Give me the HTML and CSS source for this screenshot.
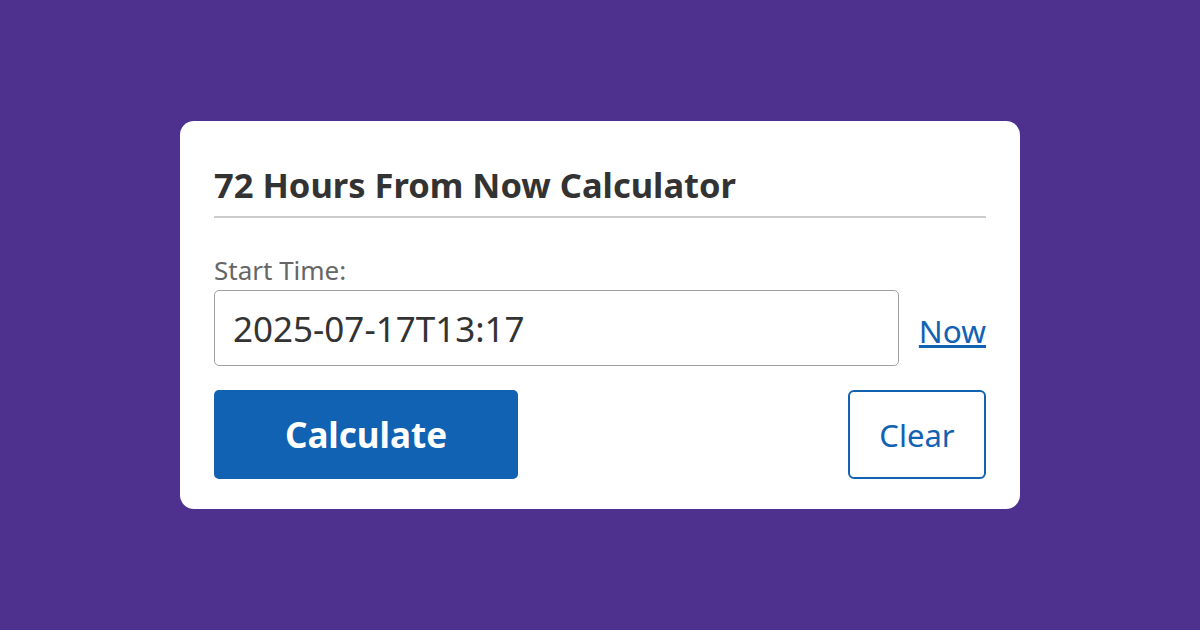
FILE: index.html
```html
<!DOCTYPE html>
<html lang="en">
<head>
    <meta charset="UTF-8">
    <meta name="viewport" content="width=device-width, initial-scale=1.0">
    <title>72 Hours From Now Calculator</title>
    <link rel="stylesheet" href="styles.css">
</head>
<body>
    <div class="calculator">
        <h1 class="calc-title">72 Hours From Now Calculator</h1>

        <label class="field-label" for="startTime">Start Time:</label>
        <div class="input-row">
            <input class="time-input" id="startTime" type="text" value="2025-07-17T13:17">
            <a class="now-link" href="#">Now</a>
        </div>

        <div class="button-row">
            <button class="calc-button">Calculate</button>
            <button class="clear-button">Clear</button>
        </div>
    </div>
</body>
</html>
```

FILE: styles.css
```css
body {
    margin: 0;
    width: 1200px;
    height: 630px;
    background-color: #4e318f;
    font-family: "Noto Sans", "Open Sans", sans-serif;
    display: flex;
    align-items: center;
    justify-content: center;
}

.calculator {
    box-sizing: border-box;
    width: 840px;
    height: 388px;
    background-color: #ffffff;
    border-radius: 14px;
    padding: 30px 34px 30px 34px;
    display: flex;
    flex-direction: column;
}

.calc-title {
    margin: 0;
    font-size: 34.5px;
    font-weight: 700;
    color: #333333;
    padding: 12px 0 9px 0;
    line-height: 44px;
    border-bottom: 2px solid #cccccc;
}

.field-label {
    margin-top: 37px;
    font-size: 26px;
    line-height: 30px;
    color: #666666;
}

.input-row {
    display: flex;
    align-items: center;
    gap: 20px;
    margin-top: 5px;
}

.time-input {
    box-sizing: border-box;
    flex: 1;
    height: 76px;
    border: 1px solid #a0a0a0;
    border-radius: 5px;
    padding: 0 18px;
    font-family: inherit;
    font-size: 35px;
    color: #333333;
}

.now-link {
    font-size: 31.5px;
    line-height: 40px;
    margin-top: 6px;
    color: #1162b3;
    text-decoration: underline;
}

.button-row {
    display: flex;
    justify-content: space-between;
    margin-top: 24px;
}

.calc-button {
    width: 304px;
    height: 89px;
    border: none;
    border-radius: 5px;
    background-color: #1162b3;
    color: #ffffff;
    font-family: inherit;
    font-size: 35px;
    font-weight: 700;
}

.clear-button {
    width: 138px;
    height: 89px;
    border: 2px solid #1162b3;
    border-radius: 6px;
    background-color: #ffffff;
    color: #1162b3;
    font-family: inherit;
    font-size: 31px;
}
```
